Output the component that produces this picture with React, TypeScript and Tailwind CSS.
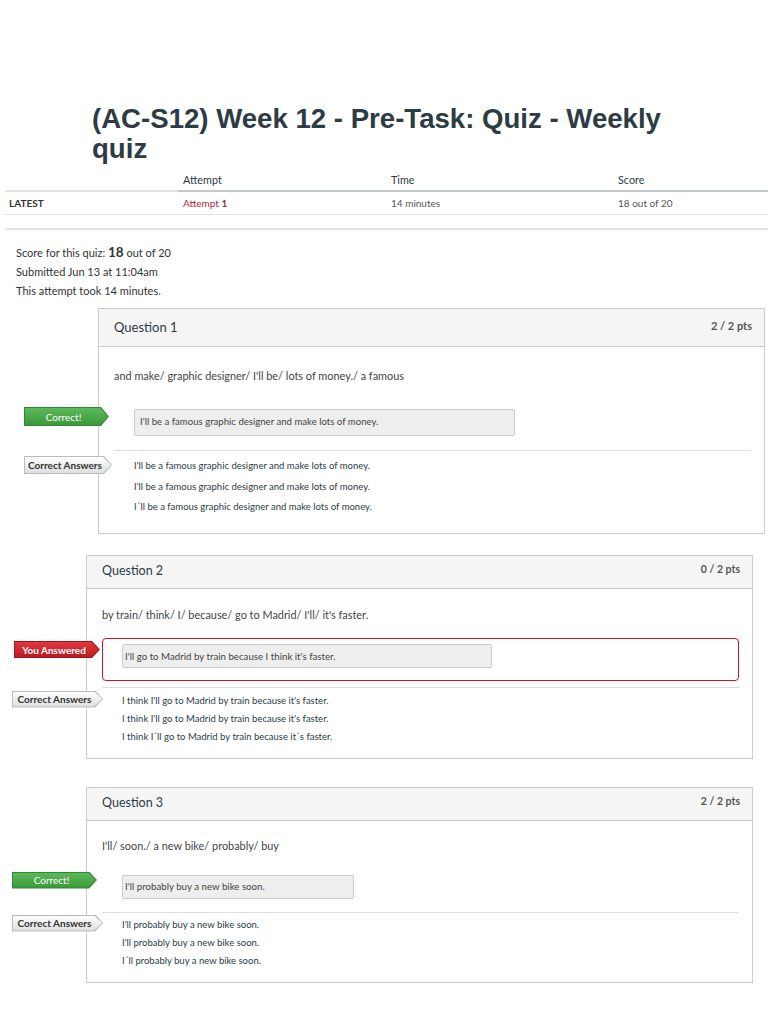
import clsx from 'clsx'

type Tone = 'green' | 'red' | 'gray'

const arrow = '[clip-path:polygon(0_0,calc(100%_-_8px)_0,100%_50%,calc(100%_-_8px)_100%,0_100%)]'

function Tag({ label, tone, className }: { label: string; tone: Tone; className: string }) {
  return (
    <div
      className={clsx(
        'absolute',
        arrow,
        tone === 'green' && 'bg-[#2e8a2e]',
        tone === 'red' && 'bg-[#9e1419]',
        tone === 'gray' && 'bg-[#b8bcbf]',
        className,
      )}
    >
      <div
        className={clsx(
          'absolute inset-px flex items-center pl-[2px] pr-[8px] justify-center text-[10px] leading-none',
          arrow,
          tone === 'green' && 'bg-linear-to-b from-[#5cb85c] to-[#3a9a3a] text-white',
          tone === 'red' && 'bg-linear-to-b from-[#e2373d] to-[#b91c22] font-bold text-white',
          tone === 'gray' && 'bg-linear-to-b from-[#ffffff] to-[#dedede] font-bold text-[#333]',
        )}
      >
        {label}
      </div>
    </div>
  )
}

function AnswerList({ items, big }: { items: string[]; big?: boolean }) {
  return (
    <div className={clsx('pl-[20px] text-[#2d3b45]', big ? 'text-[9.5px] leading-[20.5px]' : 'text-[9.5px] leading-[18px]')}>
      {items.map((a, i) => (
        <p key={i}>{a}</p>
      ))}
    </div>
  )
}

export default function App() {
  return (
    <div className="min-h-[1024px] w-[768px] bg-white font-[Lato,sans-serif] text-[#2d3b45]">
      {/* title */}
      <h1 className="w-[690px] pl-[92px] pt-[104px] font-['Liberation_Sans',Arial,sans-serif] text-[27.6px] font-bold leading-[30px] text-[#2d3b45]">
        (AC-S12) Week 12 - Pre-Task: Quiz - Weekly quiz
      </h1>

      {/* attempts table */}
      <div className="ml-[5px] mt-[6px] text-[10px]">
        <div className="flex h-[22px] items-center border-b-2 border-[#dfe3e6]">
          <div className="w-[173px]" />
          <div className="-mb-[2px] flex h-[22px] flex-1 items-center border-b-2 border-[#c2c8cc] pl-[5px] text-[10.8px]">
            <div className="w-[208px]">Attempt</div>
            <div className="w-[227px]">Time</div>
            <div>Score</div>
          </div>
        </div>
        <div className="flex h-[23px] items-center border-b border-[#e1e4e6]">
          <div className="w-[178px] pl-[4px] font-bold text-[#333]">LATEST</div>
          <div className="w-[208px] text-[#a8283a]">
            Attempt <span className="font-bold">1</span>
          </div>
          <div className="w-[227px] text-[#555]">14 minutes</div>
          <div className="text-[#555]">18 out of 20</div>
        </div>
        <div className="mt-[13px] border-b-2 border-[#e1e4e6]" />
      </div>

      {/* summary */}
      <div className="pl-[16px] pt-[13px] text-[11px] leading-[19px] text-[#333]">
        <p>
          Score for this quiz: <span className="text-[13.5px] font-bold">18</span> out of 20
        </p>
        <p>Submitted Jun 13 at 11:04am</p>
        <p>This attempt took 14 minutes.</p>
      </div>

      {/* question 1 */}
      <section className="ml-[98px] mt-[8px] w-[667px] border border-[#c7cdd1]">
        <header className="flex h-[38px] items-center justify-between border-b border-[#c7cdd1] bg-[#f5f5f5] pl-[15px] pr-[12px]">
          <h2 className="text-[13px]">Question 1</h2>
          <span className="-mt-[2px] text-[11px] font-bold text-[#555]">2 / 2 pts</span>
        </header>
        <div className="pl-[15px] pr-[13px] pb-[15px] pt-[21px]">
          <p className="text-[10.9px] leading-[16px] text-[#444]">and make/ graphic designer/ I'll be/ lots of money./ a famous</p>
          <div className="relative mt-[25px] pl-[20px]">
            <Tag label="Correct!" tone="green" className="-left-[90px] -top-[2px] h-[19px] w-[85px]" />
            <div className="flex h-[27px] w-[381px] items-center rounded-[2px] border border-[#c7cdd1] bg-[#eeeeee] pl-[5px] text-[9.6px] text-[#444]">
              I'll be a famous graphic designer and make lots of money.
            </div>
          </div>
          <div className="mt-[14px] border-t border-[#dcdfe2] pt-[5px]">
            <div className="relative">
              <Tag label="Correct Answers" tone="gray" className="-left-[90px] top-[0px] h-[18px] w-[88px]" />
              <AnswerList
                big
                items={[
                  "I'll be a famous graphic designer and make lots of money.",
                  "I'll be a famous graphic designer and make lots of money.",
                  'I´ll be a famous graphic designer and make lots of money.',
                ]}
              />
            </div>
          </div>
        </div>
      </section>

      {/* question 2 */}
      <section className="ml-[86px] mt-[21px] w-[667px] border border-[#c7cdd1]">
        <header className="flex h-[33px] items-center justify-between border-b border-[#c7cdd1] bg-[#f5f5f5] pl-[15px] pr-[12px]">
          <h2 className="text-[12.5px]">Question 2</h2>
          <span className="-mt-[3px] text-[10.5px] font-bold text-[#555]">0 / 2 pts</span>
        </header>
        <div className="pl-[15px] pr-[13px] pb-[12px] pt-[19px]">
          <p className="text-[10.9px] leading-[14px] text-[#444]">by train/ think/ I/ because/ go to Madrid/ I'll/ it's faster.</p>
          <div className="relative mt-[16px] h-[43px] rounded-[4px] border-[1.5px] border-[#d9101f] pl-[19px] pt-[5.5px]">
            <Tag label="You Answered" tone="red" className="-left-[89px] top-[2.5px] h-[17px] w-[86px]" />
            <div className="flex h-[24px] w-[370px] items-center rounded-[2px] border border-[#c7cdd1] bg-[#eeeeee] pl-[2px] text-[9.7px] text-[#444]">
              I'll go to Madrid by train because I think it's faster.
            </div>
          </div>
          <div className="mt-[6px] border-t border-[#dcdfe2] pt-[4px]">
            <div className="relative">
              <Tag label="Correct Answers" tone="gray" className="-left-[90px] -top-[1px] h-[17px] w-[91px]" />
              <AnswerList
                items={[
                  "I think I'll go to Madrid by train because it's faster.",
                  "I think I'll go to Madrid by train because it's faster.",
                  'I think I´ll go to Madrid by train because it´s faster.',
                ]}
              />
            </div>
          </div>
        </div>
      </section>

      {/* question 3 */}
      <section className="ml-[86px] mt-[28px] w-[667px] border border-[#c7cdd1]">
        <header className="flex h-[33px] items-center justify-between border-b border-[#c7cdd1] bg-[#f5f5f5] pl-[15px] pr-[12px]">
          <h2 className="text-[12.5px]">Question 3</h2>
          <span className="-mt-[3px] text-[10.5px] font-bold text-[#555]">2 / 2 pts</span>
        </header>
        <div className="pl-[15px] pr-[13px] pb-[12px] pt-[18px]">
          <p className="text-[10.9px] leading-[14px] text-[#444]">I'll/ soon./ a new bike/ probably/ buy</p>
          <div className="relative mt-[22px] pl-[20px]">
            <Tag label="Correct!" tone="green" className="-left-[90px] -top-[3px] h-[17px] w-[85px]" />
            <div className="flex h-[24px] w-[232px] items-center rounded-[2px] border border-[#c7cdd1] bg-[#eeeeee] pl-[2px] text-[9.7px] text-[#444]">
              I'll probably buy a new bike soon.
            </div>
          </div>
          <div className="mt-[13px] border-t border-[#dcdfe2] pt-[3px]">
            <div className="relative">
              <Tag label="Correct Answers" tone="gray" className="-left-[90px] -top-[1px] h-[17px] w-[91px]" />
              <AnswerList
                items={[
                  "I'll probably buy a new bike soon.",
                  "I'll probably buy a new bike soon.",
                  'I´ll probably buy a new bike soon.',
                ]}
              />
            </div>
          </div>
        </div>
      </section>
    </div>
  )
}
